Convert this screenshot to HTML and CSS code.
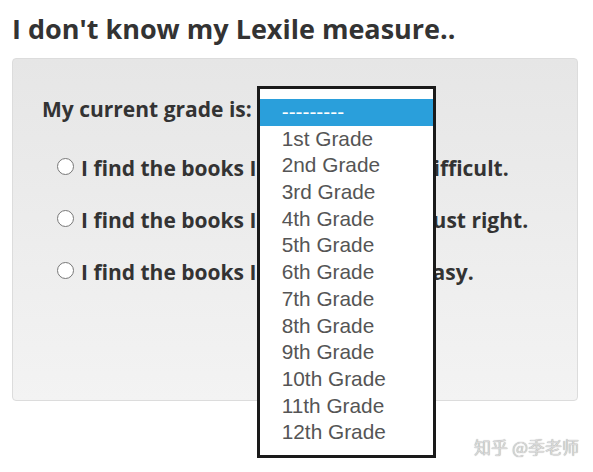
FILE: index.html
```html
<!DOCTYPE html>
<html lang="en">
<head>
    <meta charset="UTF-8">
    <meta name="viewport" content="width=device-width, initial-scale=1.0">
    <title>Lexile</title>
    <link rel="stylesheet" href="styles.css">
</head>
<body>
    <h2 class="title">I don't know my Lexile measure..</h2>

    <div class="panel">
        <div class="grade-row">
            <span class="grade-label">My current grade is:</span>
            <div class="grade-select">
                <ul class="grade-list">
                    <li class="selected">---------</li>
                    <li>1st Grade</li>
                    <li>2nd Grade</li>
                    <li>3rd Grade</li>
                    <li>4th Grade</li>
                    <li>5th Grade</li>
                    <li>6th Grade</li>
                    <li>7th Grade</li>
                    <li>8th Grade</li>
                    <li>9th Grade</li>
                    <li>10th Grade</li>
                    <li>11th Grade</li>
                    <li>12th Grade</li>
                </ul>
            </div>
        </div>

        <label class="choice"><input type="radio" name="level"> I find the books I read are really difficult.</label>
        <label class="choice"><input type="radio" name="level"> I find the books I read are pretty just right.</label>
        <label class="choice"><input type="radio" name="level"> I find the books I read are really easy.</label>
    </div>

    <div class="watermark">知乎 @季老师</div>
</body>
</html>
```

FILE: styles.css
```css
body {
    margin: 0;
    padding: 0 15px 0 12px;
    font-family: 'Open Sans', sans-serif;
    color: #333;
    background-color: #fff;
    position: relative;
    height: 472px;
    overflow: hidden;
}

.title {
    font-size: 27px;
    font-weight: bold;
    margin: 0;
    padding-top: 11px;
    line-height: 36px;
}

.panel {
    margin-top: 11px;
    height: 343px;
    box-sizing: border-box;
    border: 1px solid #dcdcdc;
    border-radius: 4px;
    background: linear-gradient(to bottom, #e6e6e6, #f3f3f3);
    padding: 30px 0 0 29px;
}

.grade-row {
    display: flex;
    align-items: center;
    height: 40px;
}

.grade-label {
    font-size: 21px;
    font-weight: bold;
}

.grade-select {
    position: relative;
    width: 7px;
    margin-left: 5px;
}

/* open dropdown of the select */
.grade-list {
    position: absolute;
    left: 0;
    top: -23px;
    width: 173px;
    margin: 0;
    padding: 10px 0 9px;
    list-style: none;
    background-color: #fff;
    border: 3px solid #1a1a1a;
    font-family: 'Liberation Sans', Arial, sans-serif;
    font-size: 20.8px;
    color: #555;
    z-index: 2;
}

.grade-list li {
    height: 26.7px;
    line-height: 26.7px;
    padding-left: 22px;
}

.grade-list li.selected {
    background-color: #2a9fdb;
    color: #fff;
}

.choice {
    display: flex;
    align-items: center;
    font-size: 21px;
    font-weight: bold;
    margin-left: 14px;
    height: 52px;
    white-space: nowrap;
}

.choice:first-of-type {
    margin-top: 13px;
}

.choice input {
    margin: 0 7px 0 1px;
    width: 17px;
    height: 17px;
    position: relative;
    top: -2px;
}

.watermark {
    position: absolute;
    right: 14px;
    bottom: 13px;
    font-family: 'Noto Sans CJK SC', sans-serif;
    font-size: 17px;
    color: #dadada;
    text-shadow: 0 0 1px #8a8a8a;
}
```
